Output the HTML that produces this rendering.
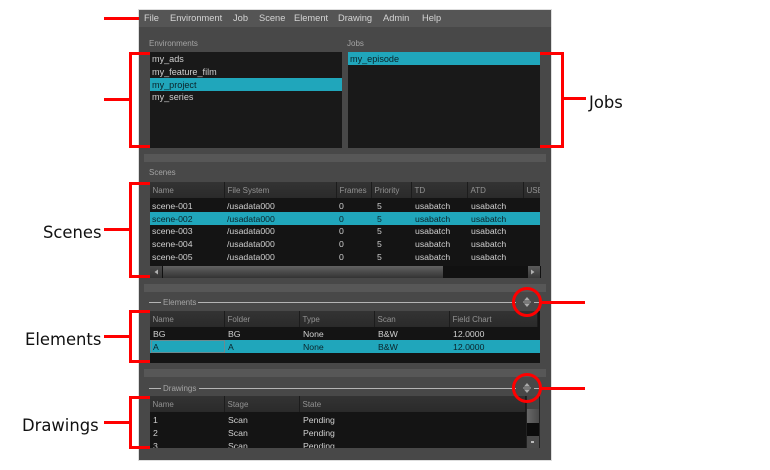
<!DOCTYPE html>
<html><head><meta charset="utf-8">
<style>
html,body{margin:0;padding:0;background:#fff;width:770px;height:470px;overflow:hidden}
body{position:relative;font-family:"Liberation Sans",sans-serif}
div{position:absolute;box-sizing:border-box}
.w{left:0;top:0;width:770px;height:470px;filter:blur(0.3px)}
.t{white-space:nowrap;font-size:8.7px;line-height:13px;color:#d0d0d0}
.e{white-space:nowrap;font-size:9.1px;line-height:13px;color:#d0d0d0}
.m{top:12px;color:#d4d4d4;font-size:9.3px;line-height:13px;white-space:nowrap}
.l{color:#a4a4a4;font-size:8px;line-height:12px;white-space:nowrap}
.h{background:linear-gradient(#333,#2a2a2a);height:16px;border-right:1px solid #1c1c1c;color:#929292;font-size:8px;line-height:18px;padding-left:2.500px;white-space:nowrap;overflow:hidden}
.s{background:#20a6bb}
.k{color:#0a2329}
.r{background:#f00}
.sp{background:#575757;left:144px;width:402px;height:8px}
.b{font-family:"DejaVu Sans",sans-serif;font-size:16.4px;line-height:20px;color:#111;white-space:nowrap}
.ln{background:#b4b4b4;height:1px}
</style></head><body>
<div class="w">
<div style="left:138px;top:9px;width:414px;height:452px;background:#dedede"></div>
<div style="left:139px;top:10px;width:412px;height:450px;background:#484848"></div>
<div style="left:139px;top:10px;width:412px;height:17px;background:#555"></div>
<div class="m" style="left:144px">File</div>
<div class="m" style="left:170px">Environment</div>
<div class="m" style="left:233px">Job</div>
<div class="m" style="left:259px">Scene</div>
<div class="m" style="left:294px">Element</div>
<div class="m" style="left:338px">Drawing</div>
<div class="m" style="left:383px">Admin</div>
<div class="m" style="left:422px">Help</div>

<div class="l" style="left:149px;top:38px">Environments</div>
<div class="l" style="left:347px;top:38px">Jobs</div>
<div style="left:150px;top:52px;width:192px;height:96px;background:#191919"></div>
<div style="left:348px;top:52px;width:192px;height:96px;background:#191919"></div>
<div class="s" style="left:150px;top:78px;width:192px;height:13px"></div>
<div class="s" style="left:348px;top:52px;width:192px;height:13px"></div>
<div class="e" style="left:152px;top:53px">my_ads</div>
<div class="e" style="left:152px;top:66px">my_feature_film</div>
<div class="e k" style="left:152px;top:79px">my_project</div>
<div class="e" style="left:152px;top:91px">my_series</div>
<div class="e k" style="left:350px;top:53px">my_episode</div>
<div class="sp" style="top:154px"></div>

<div class="l" style="left:149px;top:167px">Scenes</div>
<div style="left:150px;top:182px;width:390px;height:84px;background:#141414"></div>
<div class="h" style="left:150px;top:182px;width:75px">Name</div>
<div class="h" style="left:225px;top:182px;width:112px">File System</div>
<div class="h" style="left:337px;top:182px;width:35px">Frames</div>
<div class="h" style="left:372px;top:182px;width:40px">Priority</div>
<div class="h" style="left:412px;top:182px;width:56px">TD</div>
<div class="h" style="left:468px;top:182px;width:56px">ATD</div>
<div class="h" style="left:524px;top:182px;width:16px;border-right:0">USER</div>
<div class="s" style="left:150px;top:212px;width:390px;height:13px"></div>
<div class="t" style="left:152px;top:200px">scene-001</div>
<div class="t" style="left:227px;top:200px">/usadata000</div>
<div class="t" style="left:339px;top:200px">0</div>
<div class="t" style="left:377px;top:200px">5</div>
<div class="t" style="left:415px;top:200px">usabatch</div>
<div class="t" style="left:471px;top:200px">usabatch</div>
<div class="t k" style="left:152px;top:213px">scene-002</div>
<div class="t k" style="left:227px;top:213px">/usadata000</div>
<div class="t k" style="left:339px;top:213px">0</div>
<div class="t k" style="left:377px;top:213px">5</div>
<div class="t k" style="left:415px;top:213px">usabatch</div>
<div class="t k" style="left:471px;top:213px">usabatch</div>
<div class="t" style="left:152px;top:225px">scene-003</div>
<div class="t" style="left:227px;top:225px">/usadata000</div>
<div class="t" style="left:339px;top:225px">0</div>
<div class="t" style="left:377px;top:225px">5</div>
<div class="t" style="left:415px;top:225px">usabatch</div>
<div class="t" style="left:471px;top:225px">usabatch</div>
<div class="t" style="left:152px;top:238px">scene-004</div>
<div class="t" style="left:227px;top:238px">/usadata000</div>
<div class="t" style="left:339px;top:238px">0</div>
<div class="t" style="left:377px;top:238px">5</div>
<div class="t" style="left:415px;top:238px">usabatch</div>
<div class="t" style="left:471px;top:238px">usabatch</div>
<div class="t" style="left:152px;top:251px">scene-005</div>
<div class="t" style="left:227px;top:251px">/usadata000</div>
<div class="t" style="left:339px;top:251px">0</div>
<div class="t" style="left:377px;top:251px">5</div>
<div class="t" style="left:415px;top:251px">usabatch</div>
<div class="t" style="left:471px;top:251px">usabatch</div>
<div style="left:150px;top:266px;width:391px;height:12px;background:#111"></div>
<div style="left:150px;top:266px;width:12px;height:12px;background:linear-gradient(#4a4a4a,#333)"></div>
<div style="left:163px;top:266px;width:280px;height:12px;background:linear-gradient(#626262,#333)"></div>
<div style="left:528px;top:266px;width:12px;height:12px;background:linear-gradient(#5a5a5a,#3a3a3a)"></div>
<svg style="position:absolute;left:150px;top:266px" width="391" height="12"><path d="M8 3.500 L4.500 6 L8 8.500Z M381 3.500 L384.500 6 L381 8.500Z" fill="#b0b0b0"/></svg>
<div class="sp" style="top:284px"></div>

<div class="ln" style="left:149px;top:302px;width:12px"></div>
<div class="l" style="left:163px;top:297px">Elements</div>
<div class="ln" style="left:198px;top:302px;width:318px"></div>
<div class="ln" style="left:534px;top:302px;width:6px"></div>
<div style="left:150px;top:311px;width:390px;height:52px;background:#141414"></div>
<div class="h" style="left:150px;top:311px;width:75px">Name</div>
<div class="h" style="left:225px;top:311px;width:75px">Folder</div>
<div class="h" style="left:300px;top:311px;width:75px">Type</div>
<div class="h" style="left:375px;top:311px;width:75px">Scan</div>
<div class="h" style="left:450px;top:311px;width:88px">Field Chart</div>
<div class="s" style="left:150px;top:340px;width:390px;height:13px"></div>
<div style="left:151px;top:340px;width:74px;height:13px;border:1px solid #6b8a90"></div>
<div class="t" style="left:153px;top:328px">BG</div>
<div class="t" style="left:228px;top:328px">BG</div>
<div class="t" style="left:303px;top:328px">None</div>
<div class="t" style="left:378px;top:328px">B&amp;W</div>
<div class="t" style="left:453px;top:328px">12.0000</div>
<div class="t k" style="left:153px;top:341px">A</div>
<div class="t k" style="left:228px;top:341px">A</div>
<div class="t k" style="left:303px;top:341px">None</div>
<div class="t k" style="left:378px;top:341px">B&amp;W</div>
<div class="t k" style="left:453px;top:341px">12.0000</div>
<div class="sp" style="top:369px"></div>

<div class="ln" style="left:149px;top:388px;width:12px"></div>
<div class="l" style="left:163px;top:383px">Drawings</div>
<div class="ln" style="left:199px;top:388px;width:317px"></div>
<div class="ln" style="left:534px;top:388px;width:6px"></div>
<div style="left:150px;top:396px;width:390px;height:52px;background:#141414"></div>
<div class="h" style="left:150px;top:396px;width:75px">Name</div>
<div class="h" style="left:225px;top:396px;width:75px">Stage</div>
<div class="h" style="left:300px;top:396px;width:226px">State</div>
<div class="t" style="left:153px;top:414px">1</div>
<div class="t" style="left:228px;top:414px">Scan</div>
<div class="t" style="left:303px;top:414px">Pending</div>
<div class="t" style="left:153px;top:427px">2</div>
<div class="t" style="left:228px;top:427px">Scan</div>
<div class="t" style="left:303px;top:427px">Pending</div>
<div style="left:150px;top:440px;width:376px;height:8px;overflow:hidden">
  <div class="t" style="left:3px;top:0">3</div>
  <div class="t" style="left:78px;top:0">Scan</div>
  <div class="t" style="left:153px;top:0">Pending</div>
</div>
<div style="left:526px;top:396px;width:14px;height:52px;background:#222"></div>
<div style="left:527px;top:396px;width:12px;height:13px;background:#444"></div>
<div style="left:527px;top:409px;width:12px;height:14px;background:linear-gradient(90deg,#686868,#4a4a4a)"></div>
<div style="left:527px;top:423px;width:12px;height:13px;background:#0c0c0c"></div>
<div style="left:527px;top:436px;width:12px;height:12px;background:#4a4a4a"></div>
<div style="left:531px;top:441px;width:3px;height:2px;background:#bbb"></div>

<svg style="position:absolute;left:520px;top:295px" width="14" height="14"><path d="M7 2 L4 5.500 H10Z M7 12 L4 8.500 H10Z" fill="#aaa"/><rect x="3" y="6.500" width="8" height="1" fill="#aaa"/></svg>
<svg style="position:absolute;left:520px;top:381px" width="14" height="14"><path d="M7 2 L4 5.500 H10Z M7 12 L4 8.500 H10Z" fill="#aaa"/><rect x="3" y="6.500" width="8" height="1" fill="#aaa"/></svg>
</div>

<div class="r" style="left:104px;top:17px;width:35px;height:3px"></div>
<div class="r" style="left:104px;top:98px;width:26px;height:3px"></div>
<div class="r" style="left:129px;top:52px;width:3px;height:96px"></div>
<div class="r" style="left:129px;top:52px;width:21px;height:3px"></div>
<div class="r" style="left:129px;top:145px;width:21px;height:3px"></div>

<div class="r" style="left:540px;top:52px;width:23px;height:3px"></div>
<div class="r" style="left:540px;top:145px;width:23px;height:3px"></div>
<div class="r" style="left:561px;top:52px;width:3px;height:96px"></div>
<div class="r" style="left:563px;top:97px;width:23px;height:3px"></div>
<div class="b" style="left:589px;top:93px">Jobs</div>

<div class="r" style="left:104px;top:228px;width:26px;height:3px"></div>
<div class="r" style="left:129px;top:182px;width:3px;height:96px"></div>
<div class="r" style="left:129px;top:182px;width:21px;height:3px"></div>
<div class="r" style="left:129px;top:275px;width:21px;height:3px"></div>
<div class="b" style="left:43px;top:223px">Scenes</div>

<div class="r" style="left:104px;top:335px;width:26px;height:3px"></div>
<div class="r" style="left:129px;top:310px;width:3px;height:53px"></div>
<div class="r" style="left:129px;top:310px;width:21px;height:3px"></div>
<div class="r" style="left:129px;top:360px;width:21px;height:3px"></div>
<div class="b" style="left:25px;top:330px">Elements</div>

<div class="r" style="left:104px;top:421px;width:26px;height:3px"></div>
<div class="r" style="left:129px;top:396px;width:3px;height:53px"></div>
<div class="r" style="left:129px;top:396px;width:21px;height:3px"></div>
<div class="r" style="left:129px;top:446px;width:21px;height:3px"></div>
<div class="b" style="left:22px;top:416px">Drawings</div>

<svg style="position:absolute;left:500px;top:280px" width="90" height="130" fill="none" stroke="#f00" stroke-width="3">
<circle cx="27" cy="22" r="13.500"/><circle cx="27" cy="108" r="13.500"/>
<path d="M40 22.500 H85 M40 108.500 H85"/>
</svg>
</body></html>
